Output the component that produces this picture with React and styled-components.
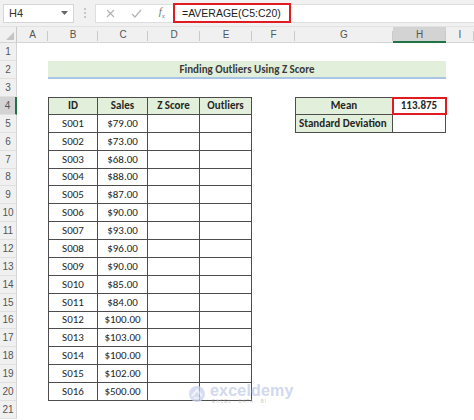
import React from "react";
import styled, { createGlobalStyle, css } from "styled-components";

const GlobalStyle = createGlobalStyle`
  html, body { margin: 0; padding: 0; background: #ffffff; }
  body { font-family: Carlito, "Liberation Sans Narrow", "Liberation Sans", Arial, sans-serif; }
  * { box-sizing: border-box; }
`;

const COLS = "17px 31px 50px 50px 52px 52px 43px 98px 53px 28px";
const ROW_H = "17.88px";

const Frame = styled.div`
  position: relative;
  width: 474px;
  height: 420px;
  overflow: hidden;
  background: #fff;
`;

const FormulaBar = styled.div`
  height: 27px;
  background: #f1f1f1;
  display: flex;
  align-items: center;
  padding-left: 3px;
  border-bottom: 1px solid #e2e2e2;
`;

const NameBox = styled.div`
  width: 71px;
  height: 19px;
  background: #fff;
  border: 1px solid #d6d6d6;
  display: flex;
  align-items: center;
  justify-content: space-between;
  padding: 0 5px 0 5px;
  font-size: 11px;
  color: #333;
  font-family: "Liberation Sans", Arial, sans-serif;
`;

const Grip = styled.div`
  width: 21px;
  display: flex;
  flex-direction: column;
  align-items: center;
  gap: 2px;
  span { width: 2px; height: 2px; background: #b9b9b9; border-radius: 50%; }
`;

const InputArea = styled.div`
  flex: 1;
  height: 19px;
  background: #fff;
  border: 1px solid #dedede;
  border-right: none;
  display: flex;
  align-items: center;
`;

const FxIcons = styled.div`
  width: 77px;
  display: flex;
  align-items: center;
  justify-content: space-around;
  padding-left: 2px;
  color: #a8a8a8;
`;

const FxLabel = styled.span`
  font-family: "Liberation Serif", "Times New Roman", serif;
  font-style: italic;
  font-size: 11px;
  color: #777;
`;

const FormulaText = styled.div`
  height: 20px;
  width: 118px;
  border: 2px solid #e01b22;
  display: flex;
  align-items: center;
  padding-left: 7px;
  font-size: 10.5px;
  color: #222;
  white-space: nowrap;
  overflow: hidden;
  font-family: "Liberation Sans", Arial, sans-serif;
`;

const Row = styled.div`
  display: grid;
  grid-template-columns: ${COLS};
  height: ${(p) => (p.$header ? "16.4px" : ROW_H)};
`;

const ColHead = styled.div`
  position: relative;
  background: ${(p) => (p.$active ? "#d3d3d3" : "#f0f0f0")};
  color: #555;
  font-size: 10px;
  display: flex;
  align-items: center;
  justify-content: center;
  border-bottom: ${(p) => (p.$active ? "2px solid #217346" : "1px solid #d4d4d4")};
  font-family: "Liberation Sans", Arial, sans-serif;
  &::after {
    content: "";
    position: absolute;
    right: 0;
    top: 4px;
    bottom: 1px;
    width: 1px;
    background: #c9c9c9;
  }
`;

const Corner = styled.div`
  background: #f0f0f0;
  border-bottom: 1px solid #d4d4d4;
  border-right: 1px solid #c9c9c9;
  display: flex;
  align-items: flex-end;
  justify-content: flex-end;
  padding: 0 2px 2px 0;
`;

const RowHead = styled.div`
  background: ${(p) => (p.$active ? "#d3d3d3" : "#f0f0f0")};
  color: #555;
  font-size: 10px;
  display: flex;
  align-items: center;
  justify-content: center;
  border-right: ${(p) => (p.$active ? "2px solid #217346" : "1px solid #d4d4d4")};
  border-bottom: 1px solid #e0e0e0;
  font-family: "Liberation Sans", Arial, sans-serif;
`;

const Cell = styled.div`
  position: relative;
  display: flex;
  align-items: center;
  justify-content: ${(p) => (p.$left ? "flex-start" : "center")};
  padding-left: ${(p) => (p.$left ? "3px" : "0")};
  font-size: 11px;
  color: #262626;
  font-weight: ${(p) => (p.$bold ? 700 : 400)};
  background: ${(p) => (p.$green ? "#e2efda" : "transparent")};
  white-space: nowrap;
  ${(p) =>
    p.$boxed &&
    css`
      border-right: 1px solid #4d4d4d;
      border-bottom: 1px solid #4d4d4d;
    `}
  ${(p) => p.$first && css`border-left: 1px solid #4d4d4d;`}
  ${(p) => p.$top && css`border-top: 1px solid #4d4d4d;`}
  ${(p) =>
    p.$selected &&
    css`
      &::after {
        content: "";
        position: absolute;
        left: -1px;
        top: -1px;
        right: -2px;
        bottom: -1px;
        border: 2px solid #e01b22;
      }
    `}
`;

const TitleCell = styled.div`
  grid-column: 3 / span 7;
  background: #e2efda;
  border-bottom: 2px solid #a9c4e4;
  display: flex;
  align-items: center;
  justify-content: center;
  font-weight: 700;
  font-size: 11px;
  color: #3a3a3a;
`;

const Watermark = styled.div`
  position: absolute;
  left: 188px;
  top: 383px;
  display: flex;
  align-items: center;
  gap: 4px;
  opacity: 0.75;
`;

const WmText = styled.div`
  display: flex;
  flex-direction: column;
  line-height: 1;
`;

const WmBrand = styled.span`
  font-family: "Liberation Sans", Arial, sans-serif;
  font-size: 16px;
  font-weight: 700;
  color: #c3cbe8;
  letter-spacing: 0.2px;
`;

const WmSub = styled.span`
  font-family: "Liberation Sans", Arial, sans-serif;
  font-size: 4.5px;
  color: #b7b7b7;
  letter-spacing: 1px;
  margin-top: 1px;
  padding-left: 2px;
`;

const data = [
  ["S001", "$79.00"],
  ["S002", "$73.00"],
  ["S003", "$68.00"],
  ["S004", "$88.00"],
  ["S005", "$87.00"],
  ["S006", "$90.00"],
  ["S007", "$93.00"],
  ["S008", "$96.00"],
  ["S009", "$90.00"],
  ["S010", "$85.00"],
  ["S011", "$84.00"],
  ["S012", "$100.00"],
  ["S013", "$103.00"],
  ["S014", "$100.00"],
  ["S015", "$102.00"],
  ["S016", "$500.00"],
];

const letters = ["A", "B", "C", "D", "E", "F", "G", "H", "I"];

const Empty = (n) => Array.from({ length: n }, (_, i) => <Cell key={"e" + i} />);

export default function App() {
  const rows = [];
  rows.push(
    <Row key="r1">
      <RowHead>1</RowHead>
      {Empty(9)}
    </Row>
  );
  rows.push(
    <Row key="r2">
      <RowHead>2</RowHead>
      <Cell />
      <TitleCell>Finding Outliers Using Z Score</TitleCell>
      <Cell />
    </Row>
  );
  rows.push(
    <Row key="r3">
      <RowHead>3</RowHead>
      {Empty(9)}
    </Row>
  );
  rows.push(
    <Row key="r4">
      <RowHead $active>4</RowHead>
      <Cell />
      <Cell $boxed $first $top $green $bold>ID</Cell>
      <Cell $boxed $top $green $bold>Sales</Cell>
      <Cell $boxed $top $green $bold>Z Score</Cell>
      <Cell $boxed $top $green $bold>Outliers</Cell>
      <Cell />
      <Cell $boxed $first $top $green $bold>Mean</Cell>
      <Cell $boxed $top $bold $selected>113.875</Cell>
      <Cell />
    </Row>
  );
  data.forEach(([id, sales], i) => {
    const n = i + 5;
    rows.push(
      <Row key={"d" + n}>
        <RowHead>{n}</RowHead>
        <Cell />
        <Cell $boxed $first>{id}</Cell>
        <Cell $boxed>{sales}</Cell>
        <Cell $boxed />
        <Cell $boxed />
        <Cell />
        {n === 5 ? (
          <>
            <Cell $boxed $first $green $bold $left>Standard Deviation</Cell>
            <Cell $boxed />
          </>
        ) : (
          <>
            <Cell />
            <Cell />
          </>
        )}
        <Cell />
      </Row>
    );
  });
  rows.push(
    <Row key="r21">
      <RowHead>21</RowHead>
      {Empty(9)}
    </Row>
  );

  return (
    <Frame>
      <GlobalStyle />
      <FormulaBar>
        <NameBox>
          <span>H4</span>
          <svg width="7" height="4" viewBox="0 0 7 4">
            <path d="M0 0 L7 0 L3.5 4 Z" fill="#666" />
          </svg>
        </NameBox>
        <Grip>
          <span />
          <span />
          <span />
        </Grip>
        <InputArea>
          <FxIcons>
            <svg width="9" height="9" viewBox="0 0 9 9">
              <path d="M1 1 L8 8 M8 1 L1 8" stroke="#b3b3b3" strokeWidth="1.2" />
            </svg>
            <svg width="11" height="9" viewBox="0 0 11 9">
              <path d="M1 5 L4 8 L10 1" stroke="#b3b3b3" strokeWidth="1.2" fill="none" />
            </svg>
            <FxLabel>
              f<sub style={{ fontSize: "7px" }}>x</sub>
            </FxLabel>
          </FxIcons>
          <FormulaText>=AVERAGE(C5:C20)</FormulaText>
        </InputArea>
      </FormulaBar>
      <Row $header>
        <Corner>
          <svg width="8" height="8" viewBox="0 0 8 8">
            <path d="M8 0 L8 8 L0 8 Z" fill="#c4c4c4" />
          </svg>
        </Corner>
        {letters.map((l) => (
          <ColHead key={l} $active={l === "H"}>
            {l}
          </ColHead>
        ))}
      </Row>
      {rows}
      <Watermark>
        <svg width="18" height="18" viewBox="0 0 18 18">
          <circle cx="9" cy="9" r="8" fill="#c9d2ec" />
          <path d="M4 11 L9 5 L14 11" stroke="#eef1fa" strokeWidth="2" fill="none" />
          <path d="M6 13 L12 13" stroke="#eef1fa" strokeWidth="1.5" />
        </svg>
        <WmText>
          <WmBrand>exceldemy</WmBrand>
          <WmSub>EXCEL · DATA · BI</WmSub>
        </WmText>
      </Watermark>
    </Frame>
  );
}
